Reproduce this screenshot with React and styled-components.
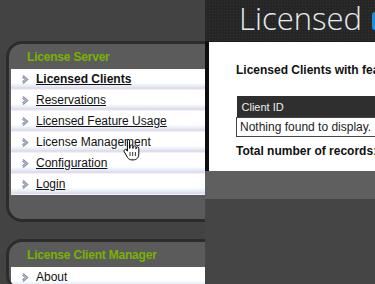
import React from "react";
import styled, { createGlobalStyle } from "styled-components";

const GlobalStyle = createGlobalStyle`
  html, body {
    margin: 0;
    padding: 0;
    background: #454545;
    font-family: "Liberation Sans", Arial, sans-serif;
  }
`;

const menu = [
  { label: "Licensed Clients", active: true },
  { label: "Reservations" },
  { label: "Licensed Feature Usage" },
  { label: "License Management", hover: true },
  { label: "Configuration" },
  { label: "Login" },
];

const Arrow = () => (
  <svg width="7" height="9" viewBox="0 0 7 9">
    <path d="M1 0.5 L5.5 4.5 L1 8.5" fill="none" stroke="#8a96aa" strokeWidth="1.5" />
    <path d="M0.5 2 L3 4.5 L0.5 7" fill="none" stroke="#46526a" strokeWidth="1" />
  </svg>
);

const Hand = () => (
  <svg width="18" height="24" viewBox="0 0 18 24">
    <path
      d="M5 1.5c1 0 1.6.6 1.6 1.6v7.2h.4V8.6c0-1 .6-1.5 1.4-1.5s1.4.5 1.4 1.5v1.7h.3V9.4c0-1 .6-1.5 1.4-1.5s1.4.5 1.4 1.5v1.4h.3v-.5c0-.9.6-1.4 1.3-1.4s1.3.5 1.3 1.4v5.6c0 3.4-2 6-5.6 6H9c-2.2 0-3.4-.9-4.6-2.6L1.4 14c-.6-.9-.4-1.8.3-2.3.7-.5 1.6-.3 2.2.4l-.4-.3.9 1.4V3.1c0-1 .6-1.6 1.6-1.6z"
      fill="#fff"
      stroke="#000"
      strokeWidth="1"
    />
    <path d="M7 14v4M9.7 14v4M12.4 14v4" stroke="#000" strokeWidth="0.8" />
  </svg>
);

const App = () => {
  return (
    <>
      <GlobalStyle />
      <Page>
        <Sidebar>
          <Panel>
            <PanelTitle>License Server</PanelTitle>
            <MenuList>
              {menu.map((item) => (
                <MenuRow key={item.label}>
                  <Arrow />
                  <MenuLink $active={item.active} $plain={item.hover}>
                    {item.label}
                  </MenuLink>
                </MenuRow>
              ))}
            </MenuList>
            <PanelFoot />
          </Panel>
          <Panel $second>
            <PanelTitle>License Client Manager</PanelTitle>
            <MenuList>
              <MenuRow>
                <Arrow />
                <MenuLink $plain>About</MenuLink>
              </MenuRow>
            </MenuList>
          </Panel>
          <Cursor>
            <Hand />
          </Cursor>
        </Sidebar>
        <Main>
          <Header>
            <Title>Licensed</Title>
            <Badge />
          </Header>
          <Content>
            <Intro>Licensed Clients with features</Intro>
            <Table>
              <thead>
                <tr>
                  <Th>Client ID</Th>
                </tr>
              </thead>
              <tbody>
                <tr>
                  <Td>Nothing found to display.</Td>
                </tr>
              </tbody>
            </Table>
            <Total>
              Total number of records: <Count>0</Count>
            </Total>
          </Content>
          <Footer />
        </Main>
      </Page>
    </>
  );
};

export default App;

const Page = styled.div`
  display: flex;
  width: 375px;
  height: 284px;
  overflow: hidden;
  background: #454545;
`;

const Sidebar = styled.div`
  position: relative;
  width: 205px;
  flex-shrink: 0;
  padding: 41px 0 0 6px;
  box-sizing: border-box;
  overflow: hidden;
  background: #434343;
`;

const Panel = styled.div`
  width: 230px;
  margin-top: ${(p) => (p.$second ? "17px" : "0")};
  border: 3px solid #2c2c2c;
  border-radius: 16px;
  background: #5b5b5b;
  overflow: hidden;
`;

const PanelTitle = styled.div`
  height: 25px;
  display: flex;
  align-items: center;
  padding-left: 18px;
  color: #77b300;
  font-size: 12px;
  font-weight: bold;
  letter-spacing: -0.2px;
`;

const MenuList = styled.div`
  margin-left: 2px;
  display: flex;
  flex-direction: column;
`;

const MenuRow = styled.div`
  height: 21px;
  display: flex;
  align-items: center;
  gap: 7px;
  padding-left: 11px;
  box-sizing: border-box;
  background: linear-gradient(
    to bottom,
    #ffffff 0%,
    #ffffff 66%,
    #f1f5fb 74%,
    #e2eaf6 84%,
    #d6dfee 89%,
    #eddbe9 94%,
    #fafafc 100%
  );
`;

const MenuLink = styled.span`
  color: #111;
  font-size: 12px;
  font-weight: ${(p) => (p.$active ? "bold" : "normal")};
  text-decoration: ${(p) => (p.$plain ? "none" : "underline")};
  margin-top: -1px;
`;

const PanelFoot = styled.div`
  height: 24px;
`;

const Cursor = styled.div`
  position: absolute;
  left: 123px;
  top: 138px;
`;

const Main = styled.div`
  flex: 1;
  display: flex;
  flex-direction: column;
  overflow: hidden;
  min-width: 0;
`;

const Header = styled.div`
  height: 41px;
  display: flex;
  align-items: center;
  gap: 10px;
  padding-left: 34px;
  background-color: #262626;
  background-image: radial-gradient(#333 0.6px, transparent 0.8px);
  background-size: 3px 3px;
`;

const Title = styled.div`
  color: #e6ebf1;
  font-family: "Open Sans", "Liberation Sans", sans-serif;
  font-weight: 300;
  font-size: 31px;
  line-height: 1;
  white-space: nowrap;
  margin-top: -4px;
`;

const Badge = styled.div`
  width: 14px;
  height: 18px;
  flex-shrink: 0;
  border-radius: 3px;
  background: #1e8fd0;
`;

const Content = styled.div`
  height: 130px;
  background: #fff;
  border-left: 4px solid #0e0e0e;
  border-top: 1px solid #1a1a1a;
  padding: 21px 0 0 27px;
  box-sizing: border-box;
  white-space: nowrap;
`;

const Intro = styled.div`
  font-size: 12px;
  font-weight: bold;
  color: #111;
`;

const Table = styled.table`
  margin-top: 19px;
  width: 300px;
  border-collapse: collapse;
`;

const Th = styled.th`
  height: 21px;
  padding: 0 0 0 5px;
  text-align: left;
  background: #2f2f2f;
  color: #eee;
  font-size: 11px;
  font-weight: normal;
`;

const Td = styled.td`
  height: 18px;
  padding: 0 0 0 3px;
  border: 1px solid #444;
  color: #222;
  font-size: 12px;
`;

const Total = styled.div`
  margin-top: 7px;
  font-size: 12px;
  font-weight: bold;
  color: #111;
`;

const Count = styled.span`
  color: #e8900c;
`;

const Footer = styled.div`
  height: 28px;
  background: #5f5f5f;
`;
